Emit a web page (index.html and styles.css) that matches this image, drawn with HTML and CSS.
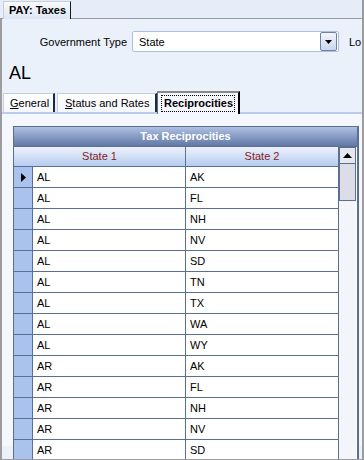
FILE: index.html
```html
<!DOCTYPE html>
<html lang="en">

<head>
    <meta charset="UTF-8">
    <meta name="viewport" content="width=device-width, initial-scale=1.0">
    <title>PAY: Taxes</title>

    <link rel="stylesheet" href="styles.css">
</head>

<body>
    <div id="docTabs">
        <div class="doc-tab">PAY: Taxes</div>
    </div>
    <div id="ventana">
        <div class="filtro">
            <label class="etiqueta">Government Type</label>
            <div class="combo">
                <span class="combo-texto">State</span>
                <span class="combo-boton">
                    <svg width="7" height="4" viewBox="0 0 7 4"><path d="M0 0h7L3.5 4z" fill="#000"/></svg>
                </span>
            </div>
            <label class="etiqueta lo">Lo</label>
        </div>
        <div class="titulo">AL</div>
        <div class="tabs">
            <div class="tab tab-general"><u>G</u>eneral</div>
            <div class="tab tab-status"><u>S</u>tatus and Rates</div>
            <div class="tab activo"><span class="foco">Reciprocities</span></div>
        </div>
        <div class="pagina">
            <div class="grid">
                <div class="grid-caption">Tax Reciprocities</div>
                <div class="grid-cuerpo">
                    <div class="tabla">
                        <div class="encabezado">
                            <div class="col-head col-head-1">State 1</div>
                            <div class="col-head">State 2</div>
                        </div>
                        <div class="fila">
                            <div class="fila-head">
                                <svg width="5" height="9" viewBox="0 0 5 9"><path d="M0 0l5 4.5L0 9z" fill="#000"/></svg>
                            </div>
                            <div class="celda">AL</div>
                            <div class="celda">AK</div>
                        </div>
                        <div class="fila"><div class="fila-head"></div><div class="celda">AL</div><div class="celda">FL</div></div>
                        <div class="fila"><div class="fila-head"></div><div class="celda">AL</div><div class="celda">NH</div></div>
                        <div class="fila"><div class="fila-head"></div><div class="celda">AL</div><div class="celda">NV</div></div>
                        <div class="fila"><div class="fila-head"></div><div class="celda">AL</div><div class="celda">SD</div></div>
                        <div class="fila"><div class="fila-head"></div><div class="celda">AL</div><div class="celda">TN</div></div>
                        <div class="fila"><div class="fila-head"></div><div class="celda">AL</div><div class="celda">TX</div></div>
                        <div class="fila"><div class="fila-head"></div><div class="celda">AL</div><div class="celda">WA</div></div>
                        <div class="fila"><div class="fila-head"></div><div class="celda">AL</div><div class="celda">WY</div></div>
                        <div class="fila"><div class="fila-head"></div><div class="celda">AR</div><div class="celda">AK</div></div>
                        <div class="fila"><div class="fila-head"></div><div class="celda">AR</div><div class="celda">FL</div></div>
                        <div class="fila"><div class="fila-head"></div><div class="celda">AR</div><div class="celda">NH</div></div>
                        <div class="fila"><div class="fila-head"></div><div class="celda">AR</div><div class="celda">NV</div></div>
                        <div class="fila"><div class="fila-head"></div><div class="celda">AR</div><div class="celda">SD</div></div>
                    </div>
                    <div class="scroll">
                        <div class="scroll-boton">
                            <svg width="9" height="5" viewBox="0 0 9 5"><path d="M0 5h9L4.5 0z" fill="#000"/></svg>
                        </div>
                        <div class="scroll-thumb"></div>
                    </div>
                </div>
            </div>
        </div>
    </div>
</body>

</html>
```

FILE: styles.css
```css
body, html {
    margin: 0;
    padding: 0;
    width: 364px;
    height: 460px;
    overflow: hidden;
    font-family: "Liberation Sans", Arial, sans-serif;
    font-size: 11px;
    color: #000;
}

#docTabs {
    display: flex;
    align-items: flex-end;
    height: 18px;
    background-color: #e6edf8;
    border-bottom: 1px solid #9a9a9a;
    border-right: 2px solid #9a9a9a;
}

.doc-tab {
    height: 17px;
    margin-left: 3px;
    margin-bottom: -1px;
    padding: 0 4px 0 5px;
    line-height: 17px;
    font-weight: bold;
    background: linear-gradient(#f8fafe, #dde6f5);
    border-left: 1px solid #c3cfe3;
    border-top: 1px solid #c3cfe3;
    border-right: 1px solid #1a1a1a;
}

#ventana {
    height: 440px;
    overflow: hidden;
    background-color: #ebf1fb;
    border-left: 2px solid #9c9c9c;
    border-right: 2px solid #9c9c9c;
    border-bottom: 1px solid #9c9c9c;
}

.filtro {
    display: flex;
    align-items: center;
    padding: 12px 0 0 31px;
    white-space: nowrap;
}

.etiqueta {
    width: 94px;
    text-align: right;
}

.lo {
    width: auto;
    margin-left: 10px;
}

.combo {
    display: flex;
    align-items: center;
    justify-content: space-between;
    box-sizing: border-box;
    width: 207px;
    height: 21px;
    margin-left: 5px;
    padding: 0 1px 0 6px;
    background-color: #fff;
    border: 1px solid #a9c0e6;
    border-radius: 2px;
}

.combo-boton {
    display: flex;
    align-items: center;
    justify-content: center;
    box-sizing: border-box;
    width: 17px;
    height: 19px;
    background: linear-gradient(#f3f6fc, #c9d6ef);
    border: 1px solid #6f82a5;
    border-radius: 2px;
}

.titulo {
    margin: 11px 0 0 7px;
    font-size: 18px;
    line-height: 20px;
}

.tabs {
    display: flex;
    align-items: flex-end;
    margin-top: 8px;
    padding-left: 1px;
    border-bottom: 2px solid #b9cbee;
}

.tab {
    box-sizing: border-box;
    height: 19px;
    padding-left: 6px;
    line-height: 18px;
    background: linear-gradient(#ffffff, #f4f7fd);
    border-left: 1px solid #c4cfe4;
    border-top: 1px solid #c4cfe4;
    border-right: 2px solid #1c2a4a;
}

.tab-general {
    width: 52px;
    margin-right: 2px;
}

.tab-status {
    width: 100px;
    padding-left: 7px;
}

.tab.activo {
    width: 83px;
    height: 23px;
    margin-bottom: -2px;
    padding: 2px 3px 0 3px;
    background: #f4f7fd;
    border-left: 1px solid #6b6b6b;
    border-top: 2px solid #8a8a8a;
    border-right: 2px solid #000;
    font-weight: bold;
}

.foco {
    display: block;
    height: 15px;
    line-height: 14px;
    padding-left: 2px;
    border: 1px dotted #000;
}

.pagina {
    height: 320px;
    padding: 12px 0 0 11px;
    background-color: #f4f7fd;
}

.grid {
    width: 343px;
    border: 1px solid #5b6f94;
    border-right-width: 2px;
    background-color: #fff;
}

.grid-caption {
    height: 19px;
    line-height: 19px;
    text-align: center;
    font-weight: bold;
    color: #fff;
    background: linear-gradient(#aebfe2, #6178a6);
    border-bottom: 1px solid #5b6f94;
}

.grid-cuerpo {
    display: flex;
}

.tabla {
    width: 325px;
}

.encabezado {
    display: flex;
    height: 19px;
    border-bottom: 1px solid #5b6f94;
    background: linear-gradient(#edf2fc, #b7ccef);
}

.col-head {
    width: 152px;
    line-height: 19px;
    text-align: center;
    color: #861c1c;
    border-right: 1px solid #5b6f94;
}

.col-head-1 {
    width: 171px;
}

.fila {
    display: flex;
    height: 20px;
    border-bottom: 1px solid #5b6f94;
}

.fila-head {
    display: flex;
    align-items: center;
    justify-content: center;
    width: 18px;
    background-color: #aac3ee;
    border-right: 1px solid #5b6f94;
}

.celda {
    box-sizing: border-box;
    width: 153px;
    padding-left: 4px;
    line-height: 20px;
    border-right: 1px solid #5b6f94;
}

.scroll {
    width: 17px;
    background-color: #f3f5fa;
}

.scroll-boton {
    display: flex;
    align-items: center;
    justify-content: center;
    box-sizing: border-box;
    height: 17px;
    background-color: #e7e8ef;
    border: 1px solid #5b6f94;
}

.scroll-thumb {
    box-sizing: border-box;
    height: 37px;
    background-color: #dcdde6;
    border: 1px solid #5b6f94;
    border-top: none;
}
```
